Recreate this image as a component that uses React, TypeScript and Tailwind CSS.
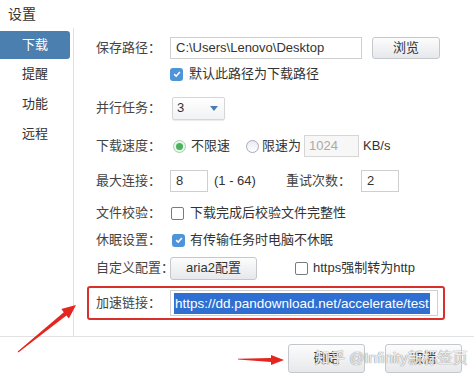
import type { ReactNode } from "react";

const font = { fontFamily: '"Liberation Sans", "Noto Sans CJK SC", sans-serif' };

function Checkbox({ checked }: { checked?: boolean }) {
  if (checked) {
    return (
      <span className="flex h-[13px] w-[13px] shrink-0 items-center justify-center rounded-[3px] bg-[#4d94d8]">
        <svg viewBox="0 0 12 12" className="h-[10px] w-[10px]">
          <path d="M2.5 6.2 L5 8.5 L9.5 3.5" fill="none" stroke="white" strokeWidth="1.8" />
        </svg>
      </span>
    );
  }
  return <span className="block h-[13px] w-[13px] shrink-0 rounded-[2px] border border-[#7a7a7a] bg-white" />;
}

function Radio({ checked, className }: { checked?: boolean; className: string }) {
  return (
    <span
      className={
        (checked
          ? "flex h-[13px] w-[13px] shrink-0 items-center justify-center rounded-full border border-[#9fd3a8] bg-[#e9f7ec] "
          : "block h-[13px] w-[13px] shrink-0 rounded-full border border-[#a9a9b3] bg-gradient-to-b from-[#e8ebf5] to-white ") +
        className
      }
    >
      {checked ? <span className="h-[7px] w-[7px] rounded-full bg-[#48b35b]" /> : null}
    </span>
  );
}

function Btn({ children, className }: { children: ReactNode; className: string }) {
  return (
    <div
      className={
        "flex items-center justify-center rounded-[3px] border border-[#c4c7cc] bg-gradient-to-b from-[#fcfcfc] to-[#e6e8eb] text-[13px] text-[#333] " +
        className
      }
    >
      {children}
    </div>
  );
}

function Row({ label, h, children }: { label: string; h: string; children?: ReactNode }) {
  return (
    <div className={"flex items-center " + h}>
      <span className="w-[74px] shrink-0 whitespace-nowrap text-[13px] text-[#444]">{label}</span>
      {children}
    </div>
  );
}

export default function App() {
  return (
    <div className="relative h-[379px] w-[474px] overflow-hidden bg-white text-[#333]" style={font}>
      <div className="flex h-[28px] items-center px-[8px] text-[14px] text-[#333]">设置</div>

      <div className="flex h-[309px] border-b border-[#e2e2e2]">
        <aside className="w-[74px] shrink-0 border-r border-[#e0e0e0] pt-[3px] text-[13px]">
          <div className="flex h-[28px] w-[70px] items-center justify-center rounded-r-[3px] bg-[#4b7fb0] text-white">
            下载
          </div>
          <div className="flex h-[30px] w-[70px] items-center justify-center">提醒</div>
          <div className="flex h-[30px] w-[70px] items-center justify-center">功能</div>
          <div className="flex h-[30px] w-[70px] items-center justify-center">远程</div>
        </aside>

        <section className="flex-1 pl-[22px] pt-[6px]">
          <Row label="保存路径：" h="h-[28px]">
            <div className="flex h-[22px] w-[192px] items-center border border-[#cfcfcf] px-[5px] text-[13px]">
              C:\Users\Lenovo\Desktop
            </div>
            <Btn className="ml-[10px] h-[22px] w-[68px]">浏览</Btn>
          </Row>

          <Row label="" h="h-[24px]">
            <div className="flex items-center gap-[6px] text-[13px]">
              <Checkbox checked />
              默认此路径为下载路径
            </div>
          </Row>

          <Row label="并行任务：" h="h-[44px]">
            <div className="ml-[2px] flex h-[23px] w-[53px] items-center justify-between rounded-[2px] border border-[#d4d6da] bg-gradient-to-b from-white to-[#f1f2f4] pl-[4px] pr-[6px] text-[13px] shadow-[0_1px_1px_rgba(0,0,0,0.08)]">
              <span>3</span>
              <svg viewBox="0 0 8 5" className="h-[5px] w-[8px]">
                <path d="M0 0 H8 L4 5 Z" fill="#4a7db3" />
              </svg>
            </div>
          </Row>

          <Row label="下载速度：" h="h-[32px]">
            <div className="flex items-center text-[13px]">
              <Radio checked className="ml-[3px]" />
              <span className="ml-[5px]">不限速</span>
              <Radio className="ml-[16px]" />
              <span className="ml-[3px]">限速为</span>
              <div className="ml-[3px] flex h-[22px] w-[55px] items-center border border-[#d6d6d6] bg-[#f7f7f7] px-[4px] text-[#a9a9a9]">
                1024
              </div>
              <span className="ml-[4px]">KB/s</span>
            </div>
          </Row>

          <Row label="最大连接：" h="h-[38px]">
            <div className="flex h-[22px] w-[38px] items-center border border-[#cfcfcf] px-[5px] text-[13px]">8</div>
            <span className="ml-[6px] text-[13px]">(1 - 64)</span>
            <span className="ml-[30px] text-[13px] text-[#444]">重试次数：</span>
            <div className="ml-[10px] flex h-[22px] w-[38px] items-center border border-[#cfcfcf] px-[5px] text-[13px]">2</div>
          </Row>

          <Row label="文件校验：" h="h-[26px]">
            <div className="ml-[1px] flex items-center gap-[6px] text-[13px]">
              <Checkbox />
              下载完成后校验文件完整性
            </div>
          </Row>

          <Row label="休眠设置：" h="h-[28px]">
            <div className="ml-[2px] flex items-center gap-[5px] text-[13px]">
              <Checkbox checked />
              有传输任务时电脑不休眠
            </div>
          </Row>

          <Row label="自定义配置：" h="h-[28px]">
            <Btn className="h-[23px] w-[87px]">aria2配置</Btn>
            <div className="ml-[38px] flex items-center gap-[5px] text-[13px]">
              <Checkbox />
              https强制转为http
            </div>
          </Row>

          <div className="-ml-[9px] mt-[4px] flex h-[34px] w-[358px] items-center rounded-[3px] border-2 border-[#d9302b] pl-[7px]">
            <span className="w-[74px] shrink-0 whitespace-nowrap text-[13px] text-[#444]">加速链接：</span>
            <div className="flex h-[26px] w-[268px] items-center border border-[#cfcfcf] px-[3px] text-[13.5px]">
              <span className="bg-[#2f6fd1] px-[1px] leading-[21px] text-white">https://dd.pandownload.net/accelerate/test</span>
            </div>
          </div>
        </section>
      </div>

      <div className="flex h-[42px] items-center justify-end gap-[20px] pr-[12px]">
        <Btn className="h-[29px] w-[77px]">确定</Btn>
        <Btn className="h-[29px] w-[77px]">取消</Btn>
      </div>

      <div
        className="pointer-events-none absolute left-[315px] top-[347px] whitespace-nowrap text-[15px] text-white/85"
        style={{ textShadow: "0 0 1px #8a8a8a, 0 0 1px #8a8a8a" }}
      >
        知乎 @Infinity新标签页
      </div>

      <svg className="pointer-events-none absolute left-0 top-0" width="474" height="379">
        <polygon
          points="18.3,352.4 66.4,315.4 68.9,318.5 76,305 61.3,309.1 63.8,312.2 17.7,351.6"
          fill="#e3261f"
        />
        <polygon points="238,358.7 271,358 271,355 284,360 271,365 271,362 238,359.6" fill="#e3261f" />
      </svg>
    </div>
  );
}
